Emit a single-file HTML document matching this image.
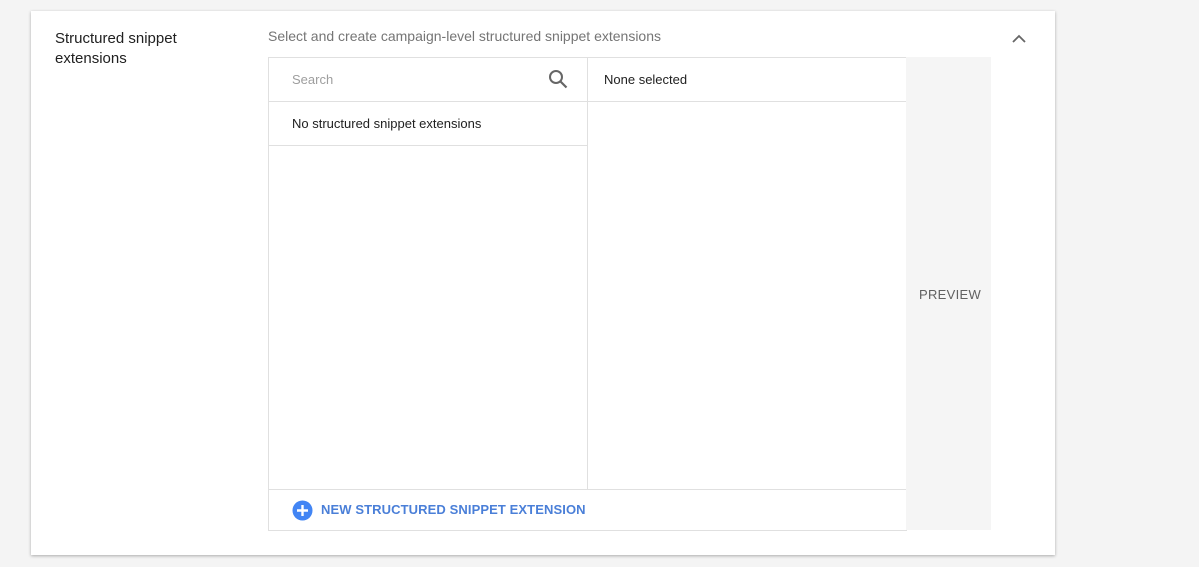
<!DOCTYPE html>
<html><head><style>
body{margin:0;width:1199px;height:567px;background:#f4f4f4;font-family:"Liberation Sans",sans-serif;position:relative;overflow:hidden}
.card{position:absolute;left:31px;top:11px;width:1024px;height:544px;background:#fff;box-shadow:0 1px 3px rgba(0,0,0,.3)}
.a{position:absolute}
</style></head><body>
<div class="card"></div>
<div class="a" style="left:55px;top:29px;font-size:15px;color:#212121;line-height:20px">Structured snippet<br>extensions</div>
<div class="a" style="left:268px;top:28px;font-size:14px;color:#757575">Select and create campaign-level structured snippet extensions</div>
<svg class="a" style="left:1011px;top:33px" width="16" height="12"><path d="M2 9 L8 3 L14 9" stroke="#666" stroke-width="1.8" fill="none"/></svg>
<div class="a" style="left:268px;top:57px;width:638px;height:472px;border:1px solid #e0e0e0;border-right:none;box-sizing:content-box"></div>
<div class="a" style="left:587px;top:57px;width:1px;height:432px;background:#e0e0e0"></div>
<div class="a" style="left:268px;top:101px;width:638px;height:1px;background:#e0e0e0"></div>
<div class="a" style="left:268px;top:145px;width:319px;height:1px;background:#e0e0e0"></div>
<div class="a" style="left:268px;top:489px;width:638px;height:1px;background:#e0e0e0"></div>
<div class="a" style="left:906px;top:57px;width:85px;height:473px;background:#f5f5f5"></div>
<div class="a" style="left:919px;top:287px;font-size:13px;color:#616161;letter-spacing:.3px">PREVIEW</div>
<div class="a" style="left:292px;top:72px;font-size:13px;color:#9e9e9e">Search</div>
<svg class="a" style="left:548px;top:69px" width="21" height="21"><circle cx="8" cy="8" r="6" stroke="#666" stroke-width="2" fill="none"/><path d="M12.5 12.5 L18.5 18.5" stroke="#666" stroke-width="2.2"/></svg>
<div class="a" style="left:604px;top:72px;font-size:13px;color:#212121">None selected</div>
<div class="a" style="left:292px;top:116px;font-size:13px;color:#212121">No structured snippet extensions</div>
<svg class="a" style="left:292px;top:500px" width="21" height="21"><circle cx="10.5" cy="10.5" r="10" fill="#4285f4"/><path d="M10.5 5v11M5 10.5h11" stroke="#fff" stroke-width="2.4"/></svg>
<div class="a" style="left:321px;top:502px;font-size:13px;font-weight:bold;color:#4a7fd8;letter-spacing:.1px">NEW STRUCTURED SNIPPET EXTENSION</div>
</body></html>
